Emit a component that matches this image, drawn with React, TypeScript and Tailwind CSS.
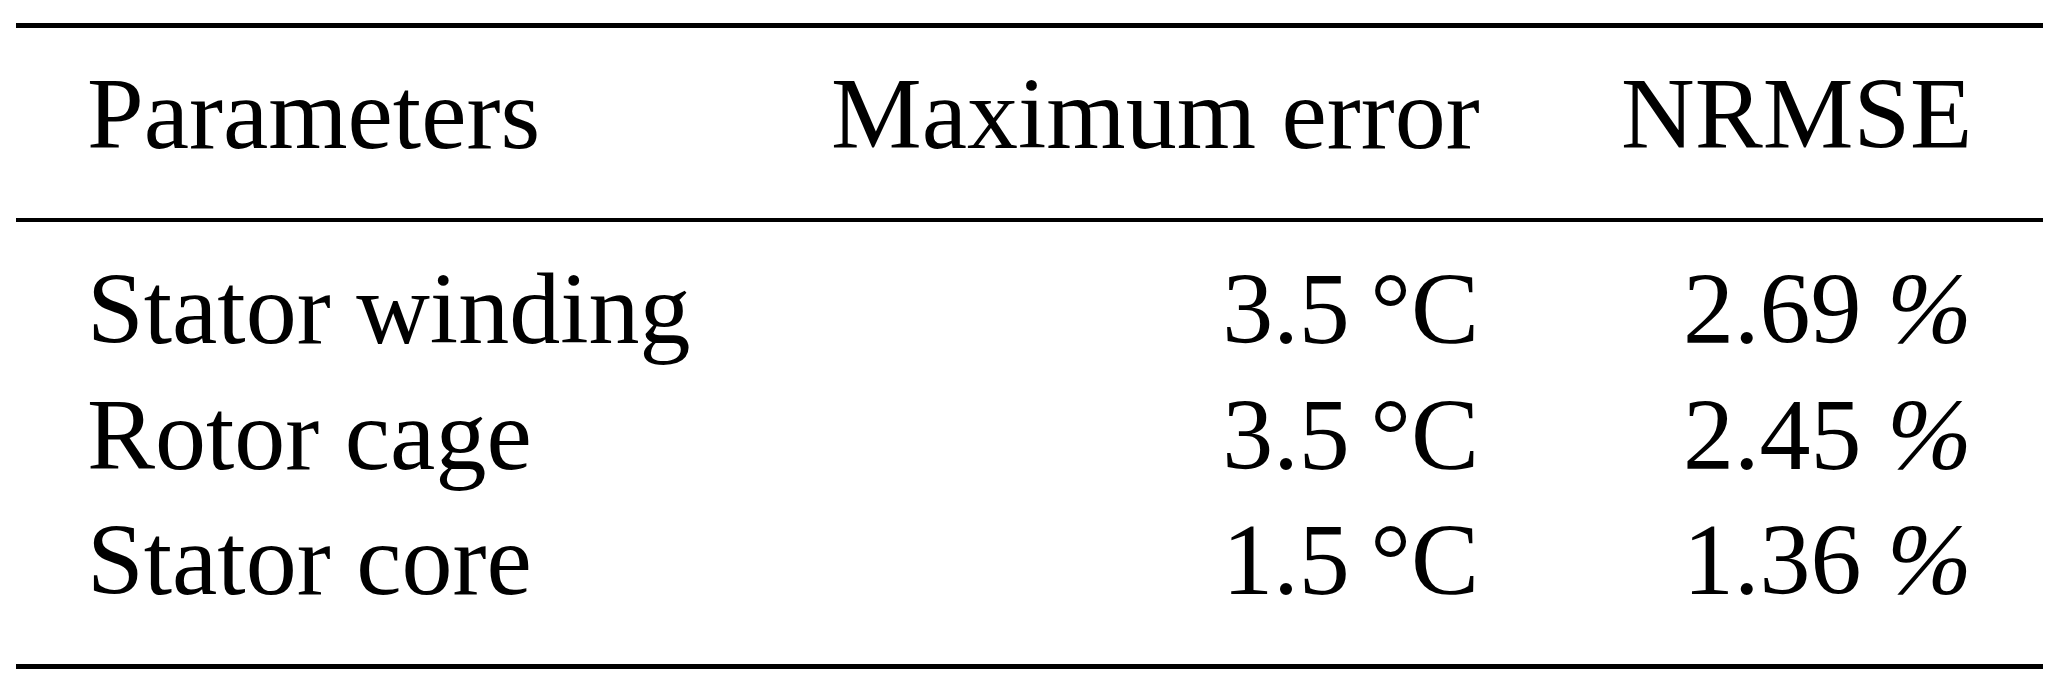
const rows = [
  { name: 'Stator winding', maxError: '3.5', nrmse: '2.69' },
  { name: 'Rotor cage', maxError: '3.5', nrmse: '2.45' },
  { name: 'Stator core', maxError: '1.5', nrmse: '1.36' },
];

export default function App() {
  return (
    <div className="w-[2067px] h-[690px] bg-white pt-[23px] pl-[16px] text-black">
      <div
        className="w-[2027px] border-t-[5px] border-b-[5px] border-black text-[102px] leading-[125.5px] whitespace-nowrap"
        style={{ fontFamily: '"Liberation Serif", "Times New Roman", serif' }}
      >
        {/* header */}
        <div className="grid grid-cols-[744px_790px_493px] pt-[23px] pb-[41.5px] border-b-[4px] border-black">
          <div className="px-[71px] text-left">Parameters</div>
          <div className="px-[71px] text-right">Maximum error</div>
          <div className="px-[71px] text-right">NRMSE</div>
        </div>

        {/* body */}
        <div className="pt-[24px] pb-[41.5px]">
          {rows.map((row) => (
            <div key={row.name} className="grid grid-cols-[744px_790px_493px]">
              <div className="px-[71px] text-left">{row.name}</div>
              <div className="px-[71px] text-right">
                {row.maxError}
                {'\u2009'}°C
              </div>
              <div className="px-[71px] text-right">
                {row.nrmse} <span className="italic">%</span>
              </div>
            </div>
          ))}
        </div>
      </div>
    </div>
  );
}
